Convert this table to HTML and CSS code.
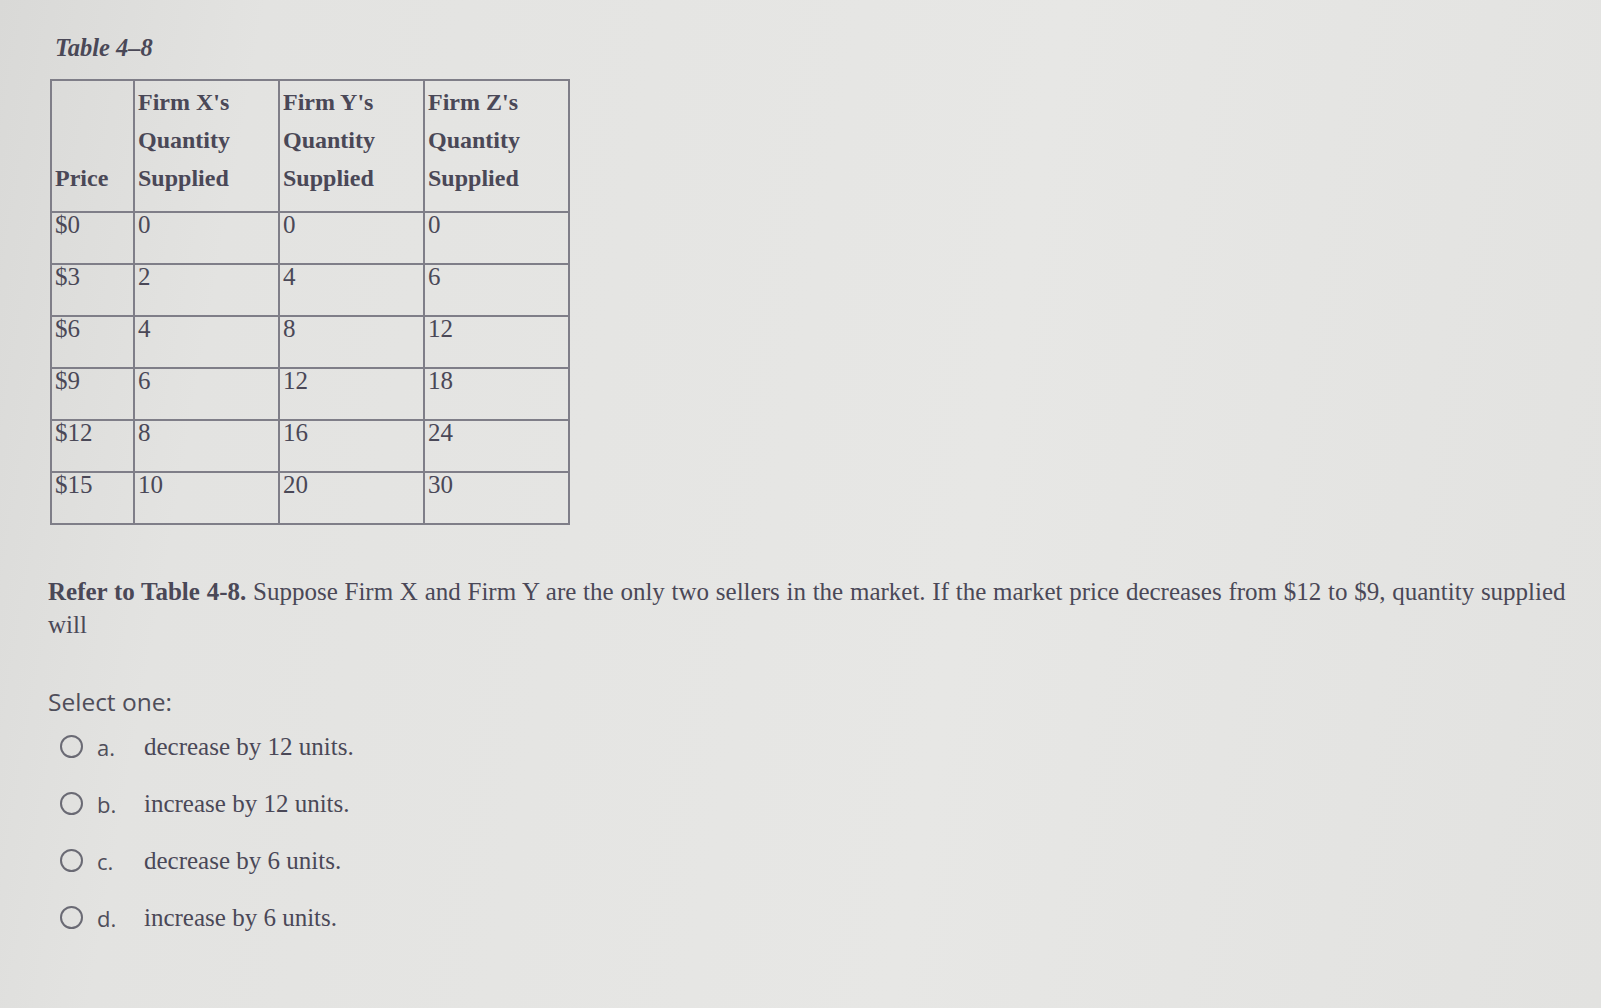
FILE: index.html
```html
<!DOCTYPE html>
<html lang="en">
<head>
  <meta charset="UTF-8">
  <title>Table 4-8</title>
  <link rel="stylesheet" href="styles.css">
</head>
<body>
  <main class="quiz">
    <p class="caption">Table 4–8</p>

    <table class="supply">
      <thead>
        <tr>
          <th class="price-col">Price</th>
          <th>Firm X's<br>Quantity<br>Supplied</th>
          <th>Firm Y's<br>Quantity<br>Supplied</th>
          <th>Firm Z's<br>Quantity<br>Supplied</th>
        </tr>
      </thead>
      <tbody>
        <tr><td>$0</td><td>0</td><td>0</td><td>0</td></tr>
        <tr><td>$3</td><td>2</td><td>4</td><td>6</td></tr>
        <tr><td>$6</td><td>4</td><td>8</td><td>12</td></tr>
        <tr><td>$9</td><td>6</td><td>12</td><td>18</td></tr>
        <tr><td>$12</td><td>8</td><td>16</td><td>24</td></tr>
        <tr><td>$15</td><td>10</td><td>20</td><td>30</td></tr>
      </tbody>
    </table>

    <p class="question"><span class="lead">Refer to Table 4-8.</span> Suppose Firm X and Firm Y are the only two sellers in the market. If the market price decreases from $12 to $9, quantity supplied will</p>

    <div class="answers">
      <p class="prompt">Select one:</p>
      <label class="option"><span class="radio"></span><span class="letter">a.</span><span class="text">decrease by 12 units.</span></label>
      <label class="option"><span class="radio"></span><span class="letter">b.</span><span class="text">increase by 12 units.</span></label>
      <label class="option"><span class="radio"></span><span class="letter">c.</span><span class="text">decrease by 6 units.</span></label>
      <label class="option"><span class="radio"></span><span class="letter">d.</span><span class="text">increase by 6 units.</span></label>
    </div>
  </main>
</body>
</html>
```

FILE: styles.css
```css
html, body {
  height: 100%;
}

body {
  margin: 0;
  background: linear-gradient(100deg, #d9d9d7 0%, #e3e3e1 15%, #e7e7e5 60%, #e2e2e0 100%);
  color: #4a4857;
  font-family: "Liberation Serif", "Times New Roman", serif;
}

.quiz {
  padding: 34px 0 0 50px;
}

.caption {
  margin: 0 0 0 5px;
  font-size: 24.5px;
  font-weight: bold;
  font-style: italic;
  line-height: 28px;
}

.supply {
  margin-top: 17px;
  border-collapse: collapse;
  border: 2px solid #7f7e88;
  font-size: 25px;
}

.supply th,
.supply td {
  border: 2px solid #7f7e88;
  text-align: left;
  padding: 0 3px;
}

.supply th {
  width: 137px;
  line-height: 38px;
  font-size: 24px;
  vertical-align: bottom;
  padding-top: 2px;
  padding-bottom: 14px;
}

.supply th.price-col {
  width: 75px;
}

.supply td {
  height: 50px;
  vertical-align: top;
  line-height: 24px;
}

.question {
  margin: 50px 0 0 -2px;
  max-width: 1545px;
  font-size: 25px;
  word-spacing: 0.5px;
  line-height: 33px;
}

.lead {
  font-weight: bold;
}

.answers {
  margin-top: 46px;
}

.prompt {
  margin: 0 0 1px -2px;
  font-family: "Open Sans", sans-serif;
  font-size: 24.5px;
  line-height: 30px;
  color: #4f4e5a;
}

.option {
  display: flex;
  align-items: center;
  height: 57px;
  margin-left: 10px;
}

.radio {
  width: 19px;
  height: 19px;
  border: 2px solid #6a6a74;
  border-radius: 50%;
  margin-right: 14px;
}

.letter {
  width: 47px;
  font-family: "Open Sans", sans-serif;
  font-size: 22px;
  color: #4f4e5a;
}

.text {
  font-size: 25px;
}
```
